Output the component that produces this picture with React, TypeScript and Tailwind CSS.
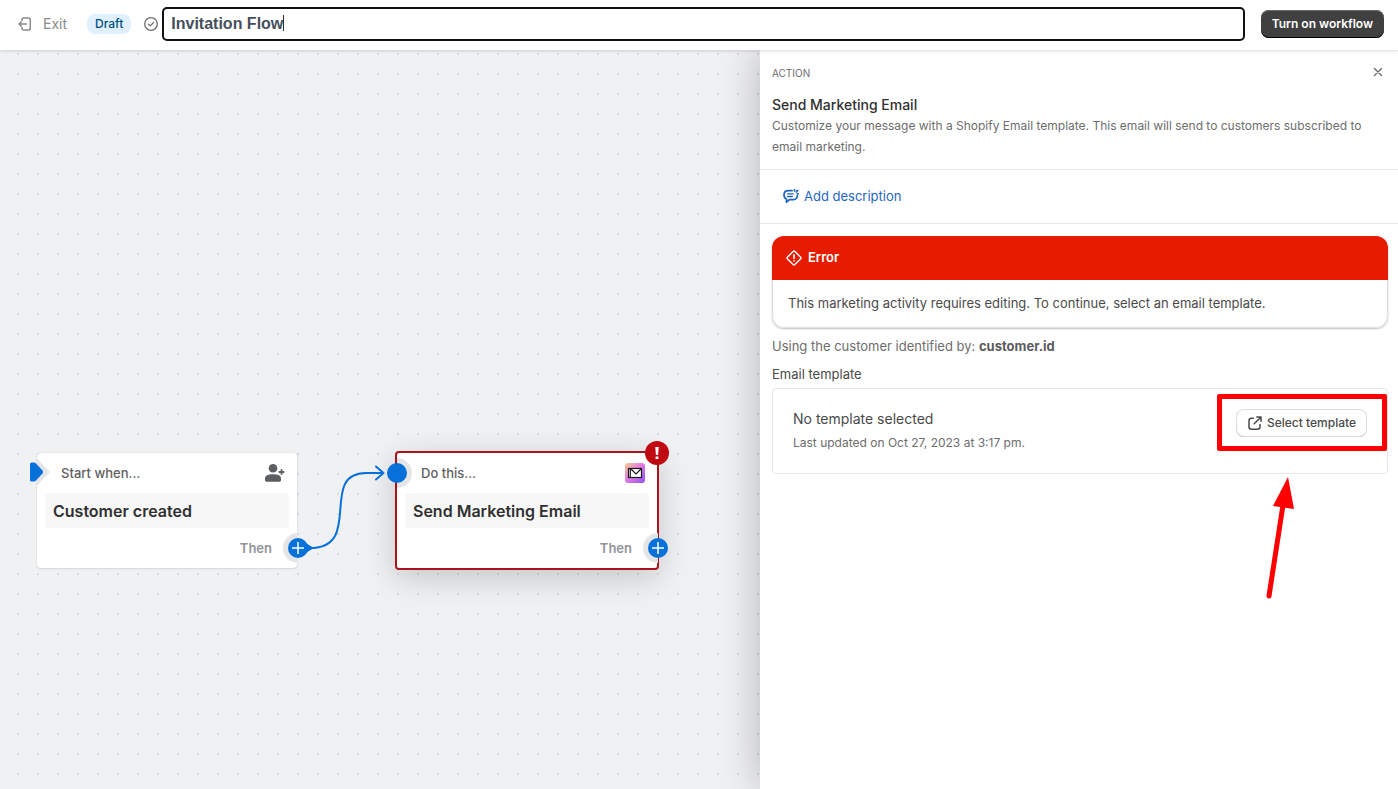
import type { ReactNode } from "react";

const ExitIcon = () => (
  <svg className="w-4 h-4" viewBox="0 0 16 16" fill="none" stroke="currentColor" strokeWidth="1.5" strokeLinecap="round" strokeLinejoin="round">
    <path d="M5 4.500V3.500C5 2.400 5.700 1.900 6.600 1.900H11.400C12.600 1.900 13.300 2.600 13.300 3.800V12.200C13.300 13.400 12.600 14.100 11.400 14.100H6.600C5.700 14.100 5 13.600 5 12.500V11.500" />
    <path d="M9.500 8H2M4.300 5.800 2 8l2.300 2.200" />
  </svg>
);

const CheckCircleIcon = () => (
  <svg className="w-4 h-4 text-[#6d6d6d]" viewBox="0 0 16 16" fill="none" stroke="currentColor" strokeWidth="1.3" strokeLinecap="round" strokeLinejoin="round">
    <circle cx="8" cy="8" r="6.300" />
    <path d="m5.500 8.200 1.800 1.700 3.300-3.500" />
  </svg>
);

const PersonAddIcon = () => (
  <svg className="w-5 h-5 overflow-visible" viewBox="1 0 20 20" fill="#5c5f62">
    <circle cx="9" cy="5.200" r="4.300" />
    <path d="M1 15.500C1 12.600 4.300 11.300 9 11.300s8 1.300 8 4.200V17c0 1-.7 1.800-1.700 1.800H2.700C1.700 18.800 1 18 1 17z" />
    <path d="M17.500 6.200v5.600M14.700 9h5.600" stroke="#5c5f62" strokeWidth="1.800" />
  </svg>
);

const EmailAppIcon = () => (
  <svg className="w-5 h-5" viewBox="0 0 20 20">
    <defs>
      <linearGradient id="email-bg" x1="0" y1="0" x2="1" y2="1">
        <stop offset="0" stopColor="#f9cf86" />
        <stop offset="0.45" stopColor="#e57be4" />
        <stop offset="1" stopColor="#9052ee" />
      </linearGradient>
    </defs>
    <rect width="20" height="20" rx="3" fill="url(#email-bg)" />
    <rect x="3.500" y="5.500" width="13" height="9" fill="#fff" stroke="#1a1a1a" strokeWidth="1.200" />
    <path d="M5.300 5.500v9M6 6l5 5 5-5" fill="none" stroke="#1a1a1a" strokeWidth="1.200" />
  </svg>
);

const NoteIcon = () => (
  <svg className="w-4 h-4" viewBox="0 0 16 16" fill="none" stroke="currentColor" strokeWidth="1.700" strokeLinecap="round" strokeLinejoin="round">
    <path d="M9 1.700H5.200C2.800 1.700 1 3.500 1 6.100c0 2 .9 3.300 2.500 4v3.100l3-2.500h3.200c2.600 0 4.400-1.500 4.600-4" />
    <path d="M4.500 4.900H10M4.500 7.500h4.800" strokeWidth="1.300" />
    <path d="M11.500.8v1M14.600 1.400l-1.300 1.400M14.300 4.800h1" />
  </svg>
);

const ErrorIcon = () => (
  <svg className="w-4 h-4" viewBox="0 0 16 16" fill="none" stroke="currentColor" strokeWidth="1.400" strokeLinecap="round" strokeLinejoin="round">
    <path d="M7.100 1.500a1.300 1.300 0 0 1 1.800 0l5.600 5.600a1.300 1.300 0 0 1 0 1.800l-5.600 5.600a1.300 1.300 0 0 1-1.800 0L1.500 8.900a1.300 1.300 0 0 1 0-1.800z" />
    <path d="M8 4.800v3.600M8 10.900v.1" strokeWidth="1.600" />
  </svg>
);

const ExternalIcon = () => (
  <svg className="w-4 h-4" viewBox="0 0 16 16" fill="none" stroke="currentColor" strokeWidth="1.500" strokeLinecap="round" strokeLinejoin="round">
    <path d="M6.500 3.200H4.500C3 3.200 2 4.200 2 5.700v6C2 13.200 3 14.200 4.500 14.200h6c1.500 0 2.500-1 2.500-2.500V9.500" />
    <path d="M9.800 2H14v4.200M13.800 2.200 7.200 8.800" />
  </svg>
);

const CloseIcon = () => (
  <svg className="w-3 h-3" viewBox="0 0 12 12" fill="none" stroke="currentColor" strokeWidth="1.400" strokeLinecap="round">
    <path d="m2.500 2.500 7 7M9.500 2.500l-7 7" />
  </svg>
);

const AddStepButton = ({ connected = false }: { connected?: boolean }) => (
  <button type="button" aria-label="Add step" className="absolute -right-4 bottom-[5px] w-[30px] h-[30px]">
    <svg className="w-full h-full overflow-visible" viewBox="0 0 30 30">
      <path d="M15 0a15 15 0 0 0 0 30z" fill="#e4e5e7" />
      {connected && <path d="M19 6.500C23 10 27 13.500 32 15c-5 1.500-9 5-13 8.500z" fill="#0870d9" />}
      <circle cx="15" cy="15" r="10" fill="#0870d9" />
      <path d="M15 9v12M9 15h12" stroke="#fff" strokeWidth="1.500" />
    </svg>
  </button>
);

interface StepProps {
  label: string;
  title: string;
  icon: ReactNode;
}

const StepContent = ({ label, title, icon }: StepProps) => (
  <>
    <div className="flex items-center justify-between h-10 pl-6 pr-3">
      <span className="pt-[2px] text-[13px] font-medium text-[#616161]">{label}</span>
      {icon}
    </div>
    <h3 className="mx-2 px-2 pt-[2px] rounded bg-[#f7f7f7] text-base leading-[33px] font-semibold text-[#303030]">{title}</h3>
    <div className="flex items-center justify-end h-10 pt-[2px] pr-[25px] text-[13px] font-semibold text-[#919499]">Then</div>
  </>
);

const Header = () => (
  <header className="relative z-20 flex items-center h-[50px] pl-[17px] pr-[14px] pb-[2px] bg-white shadow-[0_1px_3px_rgba(0,0,0,0.15)]">
    <a href="#exit" className="flex items-center gap-[10px] text-sm text-[#8a8a8a]">
      <ExitIcon />
      Exit
    </a>
    <span className="ml-5 mr-3 px-2 rounded-lg bg-[#e0f0ff] text-xs leading-5 font-medium text-[#00527c]">Draft</span>
    <CheckCircleIcon />
    <div className="relative flex-1 ml-[3px]">
      <input
        aria-label="Workflow name"
        defaultValue="Invitation Flow"
        className="block w-full h-[34px] px-[7px] border-2 border-[#111213] rounded-[5px] outline-none bg-white font-['Liberation_Sans',Arial,sans-serif] text-base font-bold text-[#454f5b]"
      />
      <span className="absolute left-[121px] top-2 w-px h-4 bg-[#303030]" />
    </div>
    <button type="button" className="ml-4 h-7 px-[11px] rounded-lg bg-[#404040] text-xs font-semibold text-white shadow-[inset_0_-1px_0_#000,inset_0_1px_0_#6b6b6b]">
      Turn on workflow
    </button>
  </header>
);

const Canvas = () => (
  <main className="relative flex-1 min-w-0 overflow-hidden bg-[#f0f1f3] bg-[radial-gradient(circle,#d9dadd_1px,transparent_1.5px)] bg-[size:20px_20px] bg-[position:8px_-6px]">
    <svg className="absolute left-0 top-0 w-[420px] h-[560px] z-10 pointer-events-none" viewBox="0 0 420 560" fill="none" stroke="#0870d9" strokeWidth="2">
      <path d="M310 498C364 498 318 423 366 423H383" />
      <path d="M376 416.500 383.500 423 376 429.500" strokeLinecap="round" strokeLinejoin="round" />
    </svg>

    <section className="absolute left-[37px] top-[403px] w-[260px] rounded bg-white shadow-[0_0_2px_rgba(0,0,0,0.1),0_1px_2px_rgba(0,0,0,0.1)]">
      <svg className="absolute -left-[7px] top-1 w-5 h-[30px]" viewBox="0 0 20 30">
        <path d="M7 1.500 18.500 13.500q1.500 1.500 0 3L7 28.500z" fill="#e4e5e7" />
        <path d="M0 7q0-1.500 1.500-1.500H4q1 0 2 1l6.500 7q1.200 1.500 0 3L6 23.500q-1 1-2 1H1.500Q0 24.500 0 23z" fill="#0870d9" />
      </svg>
      <StepContent label="Start when..." title="Customer created" icon={<PersonAddIcon />} />
      <AddStepButton connected />
    </section>

    <section className="absolute left-[395px] top-[401px] w-[264px] border-2 border-[#a8141e] rounded bg-white shadow-[0_8px_32px_rgba(0,0,0,0.18)]">
      <svg className="absolute -left-[15px] top-[5px] w-[30px] h-[30px]" viewBox="0 0 30 30">
        <path d="M15 0a15 15 0 0 1 0 30z" fill="#e4e5e7" />
        <circle cx="15" cy="15" r="10" fill="#0870d9" />
      </svg>
      <StepContent label="Do this..." title="Send Marketing Email" icon={<EmailAppIcon />} />
      <AddStepButton />
      <svg className="absolute -right-3 -top-3 w-6 h-6" viewBox="0 0 24 24">
        <circle cx="12" cy="12" r="12" fill="#c00a12" />
        <path d="M10.300 6h3.400l-.6 8h-2.200zM10.600 15.500h2.800v2.500h-2.800z" fill="#fff" />
      </svg>
    </section>
  </main>
);

const ErrorBanner = () => (
  <div role="alert" className="rounded-xl overflow-hidden bg-white shadow-[inset_0_0_0_1px_#e0e0e0,0_1px_2px_rgba(0,0,0,0.25)]">
    <div className="flex items-center gap-[6px] h-11 px-[14px] bg-[#e51c00] text-[13px] font-semibold text-white">
      <ErrorIcon />
      Error
    </div>
    <p className="px-4 pt-[11px] pb-[13px] text-[13px] leading-6 text-[#4a4a4a]">
      This marketing activity requires editing. To continue, select an email template.
    </p>
  </div>
);

const TemplateCard = () => (
  <div className="relative flex items-start justify-between mt-1 p-5 border border-[#e8e8e8] rounded">
    <div>
      <p className="text-sm text-[#4a4a4a]">No template selected</p>
      <p className="mt-1 text-xs leading-5 text-[#6d6d6d]">Last updated on Oct 27, 2023 at 3:17 pm.</p>
    </div>
    <button type="button" className="flex items-center gap-1 h-7 px-[11px] rounded-lg bg-white text-xs font-medium text-[#4a4a4a] shadow-[inset_0_0_0_1px_#dcdcdc,inset_0_-1px_0_#b5b5b5]">
      <ExternalIcon />
      Select template
    </button>
    <div className="absolute right-0 top-[5px] w-[170px] h-[57px] border-[5px] border-[#fe0000] rounded-xs pointer-events-none" />
    <svg className="absolute right-[92px] top-[88px] w-[30px] h-[124px] pointer-events-none" viewBox="0 0 30 124">
      <path d="M4 119 18 28" stroke="#fe0000" strokeWidth="5" strokeLinecap="round" />
      <path d="M23 0 29 32 8 29z" fill="#fe0000" />
    </svg>
  </div>
);

const ActionPanel = () => (
  <aside className="relative z-10 w-[638px] shrink-0 bg-white shadow-[0_0_40px_rgba(0,0,0,0.25)]">
    <div className="px-3 pt-3 pb-3 border-b border-[#e8e8e8]">
      <div className="flex items-center justify-between h-5 pr-[2px] text-[#6d6d6d]">
        <span className="pt-[2px] text-[10px]">ACTION</span>
        <button type="button" aria-label="Close">
          <CloseIcon />
        </button>
      </div>
      <h2 className="mt-3 text-sm leading-[21px] font-medium text-[#303030]">Send Marketing Email</h2>
      <p className="text-xs leading-[21px] text-[#6d6d6d]">
        Customize your message with a Shopify Email template. This email will send to customers subscribed to email marketing.
      </p>
    </div>
    <div className="flex items-center h-[54px] px-[23px] border-b border-[#e8e8e8]">
      <button type="button" className="flex items-center gap-[5px] text-[13px] text-[#1f66c1]">
        <NoteIcon />
        Add description
      </button>
    </div>
    <div className="pl-3 pr-[10px] pt-3">
      <ErrorBanner />
      <p className="mt-2 text-[13px] leading-5 text-[#6d6d6d]">
        Using the customer identified by: <strong className="font-bold text-[#5c5c5c]">customer.id</strong>
      </p>
      <p className="mt-2 text-[13px] leading-5 text-[#4a4a4a]">Email template</p>
      <TemplateCard />
    </div>
  </aside>
);

export default function App() {
  return (
    <div className="flex flex-col min-h-screen font-['Inter',sans-serif]">
      <Header />
      <div className="flex flex-1">
        <Canvas />
        <ActionPanel />
      </div>
    </div>
  );
}
